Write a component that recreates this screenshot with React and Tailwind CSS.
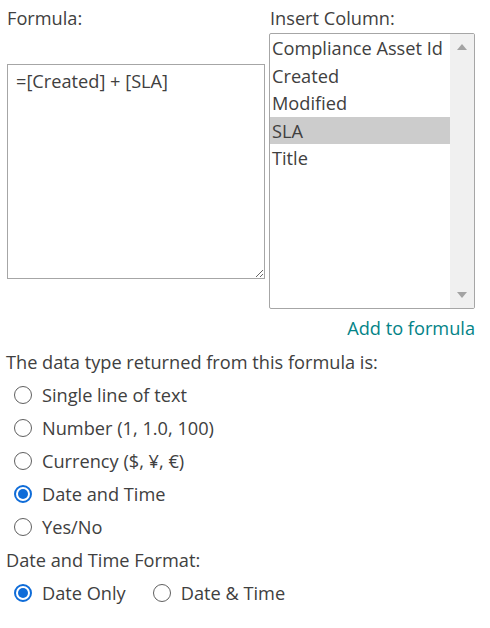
import React, { useState } from 'react';

const columns = ['Compliance Asset Id', 'Created', 'Modified', 'SLA', 'Title'];

const dataTypes = [
  'Single line of text',
  'Number (1, 1.0, 100)',
  'Currency ($, ¥, €)',
  'Date and Time',
  'Yes/No',
];

const Radio = ({ checked, label, onClick }) => (
  <label className="flex items-center cursor-pointer" onClick={onClick}>
    <span
      className={`flex items-center justify-center w-[18px] h-[18px] rounded-full bg-white ${
        checked ? 'border-2 border-[#0f6cd8]' : 'border border-[#5f5f5f]'
      }`}
    >
      {checked && <span className="w-[10px] h-[10px] rounded-full bg-[#0f6cd8]" />}
    </span>
    <span className="ml-[10px]">{label}</span>
  </label>
);

export default function App() {
  const [formula, setFormula] = useState('=[Created] + [SLA]');
  const [selected, setSelected] = useState('SLA');
  const [dataType, setDataType] = useState('Date and Time');
  const [format, setFormat] = useState('Date Only');

  return (
    <div
      className="w-[490px] h-[628px] bg-white text-[#404040] text-[18.2px]"
      style={{ fontFamily: '"Open Sans", "Noto Sans", Arial, sans-serif' }}
    >
      {/* Formula + Insert Column */}
      <div className="flex pt-[6px]">
        <div className="pl-[7px]">
          <div className="leading-[24px]">Formula:</div>
          <textarea
            value={formula}
            onChange={(e) => setFormula(e.target.value)}
            className="block mt-[34px] w-[258px] h-[215px] border border-[#a6a6a6] px-[8px] py-[4px] leading-[24px] text-[#404040] outline-none resize"
          />
        </div>
        <div className="ml-[4px]">
          <div className="leading-[24px] pl-[1px]">Insert Column:</div>
          <div className="mt-[3px] flex w-[206px] h-[276px] border border-[#a6a6a6] rounded-[2px] overflow-hidden">
            <div className="flex-1">
              {columns.map((col) => (
                <div
                  key={col}
                  onClick={() => setSelected(col)}
                  className={`h-[27.5px] leading-[28.5px] pl-[2px] whitespace-nowrap cursor-default ${
                    selected === col ? 'bg-[#cccccc]' : ''
                  }`}
                >
                  {col}
                </div>
              ))}
            </div>
            <div className="w-[24px] bg-[#f0f0f0] flex flex-col justify-between items-center py-[10px]">
              <svg width="10" height="6" viewBox="0 0 10 6">
                <path d="M0 6 L5 0 L10 6 Z" fill="#a3a3a3" />
              </svg>
              <svg width="10" height="6" viewBox="0 0 10 6">
                <path d="M0 0 L5 6 L10 0 Z" fill="#a3a3a3" />
              </svg>
            </div>
          </div>
        </div>
      </div>

      <div className="mt-[3px] h-[33px] flex items-center justify-end w-[475px]">
        <a className="text-[#038387] cursor-pointer">Add to formula</a>
      </div>

      <div className="mt-[1px] h-[33px] flex items-center pl-[6px]">
        The data type returned from this formula is:
      </div>

      {dataTypes.map((t) => (
        <div key={t} className="h-[33px] flex items-center pl-[14px]">
          <Radio checked={dataType === t} label={t} onClick={() => setDataType(t)} />
        </div>
      ))}

      <div className="h-[33px] flex items-center pl-[6px]">Date and Time Format:</div>

      <div className="h-[33px] flex items-center pl-[14px] gap-[27px]">
        <Radio checked={format === 'Date Only'} label="Date Only" onClick={() => setFormat('Date Only')} />
        <Radio checked={format === 'Date & Time'} label="Date & Time" onClick={() => setFormat('Date & Time')} />
      </div>
    </div>
  );
}
